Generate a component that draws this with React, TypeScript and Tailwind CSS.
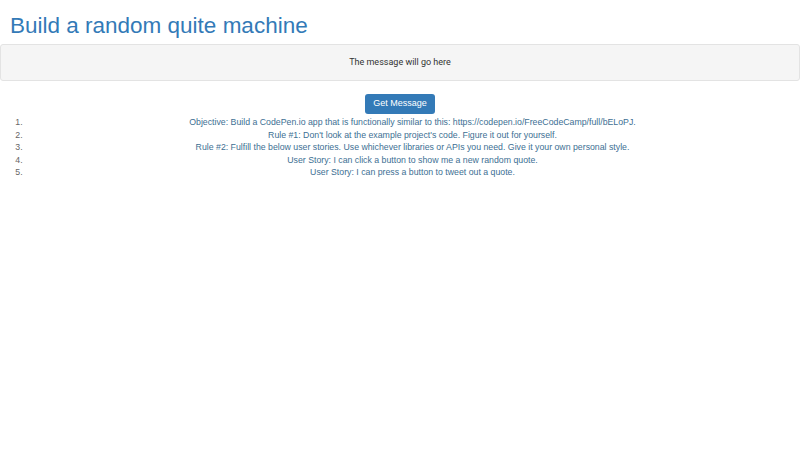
export default function App() {
  const items = [
    "Objective: Build a CodePen.io app that is functionally similar to this: https://codepen.io/FreeCodeCamp/full/bELoPJ.",
    "Rule #1: Don't look at the example project's code. Figure it out for yourself.",
    "Rule #2: Fulfill the below user stories. Use whichever libraries or APIs you need. Give it your own personal style.",
    "User Story: I can click a button to show me a new random quote.",
    "User Story: I can press a button to tweet out a quote.",
  ];

  return (
    <div className="min-h-[450px] bg-white font-['Liberation_Sans',Arial,sans-serif]">
      <h1 className="px-[10px] pt-[12px] pb-[4px] text-[22.5px] leading-[28px] text-[#337ab7]">
        Build a random quite machine
      </h1>
      <div className="flex h-[37px] items-center justify-center rounded-[3px] border border-[#e3e3e3] bg-[#f5f5f5] font-['Roboto',sans-serif] text-[9px] text-[#333]">
        The message will go here
      </div>
      <div className="mt-[13px] flex justify-center">
        <button className="h-[20px] rounded-[3px] bg-[#337ab7] px-[8px] text-[9px] text-white">
          Get Message
        </button>
      </div>
      <ol className="mt-[2px] list-decimal pl-[25px] text-[8.75px] leading-[12.5px] text-[#3d6f93] marker:text-[#666]">
        {items.map((item) => (
          <li key={item} className="text-center">
            {item}
          </li>
        ))}
      </ol>
    </div>
  );
}
